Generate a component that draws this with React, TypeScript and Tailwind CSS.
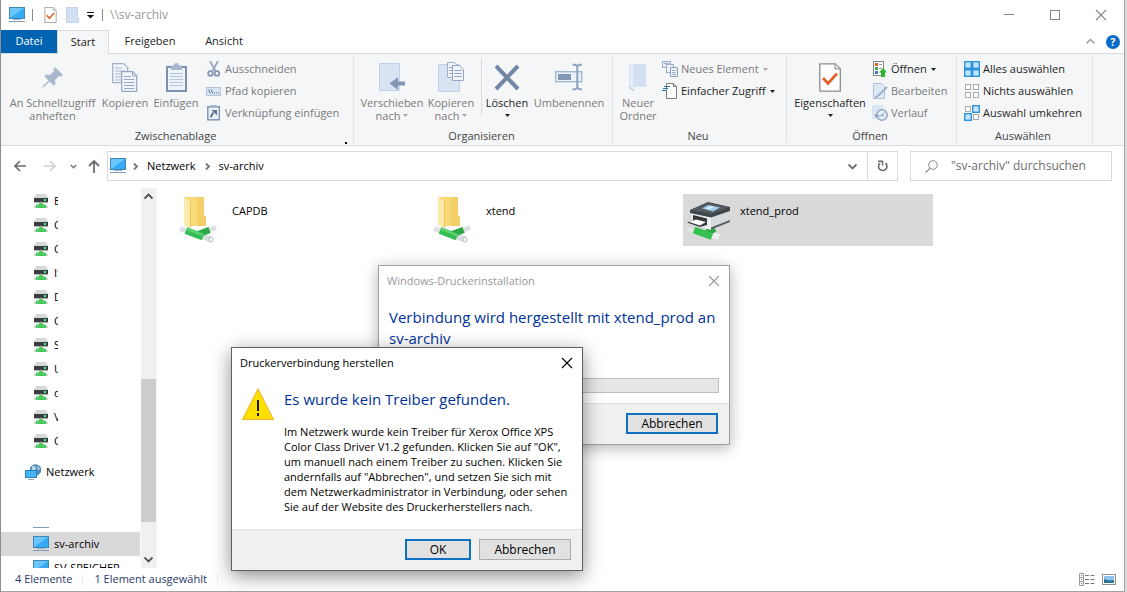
import type { ReactNode } from "react";
import clsx from "clsx";

function Svg({
  w,
  h,
  box,
  children,
}: {
  w: number;
  h: number;
  box?: string;
  children: ReactNode;
}) {
  return (
    <svg
      width={w}
      height={h}
      viewBox={box ?? `0 0 ${w} ${h}`}
      fill="none"
      aria-hidden="true"
      className="shrink-0"
    >
      {children}
    </svg>
  );
}

// Icons

function ComputerIcon() {
  return (
    <Svg w={16} h={16}>
      <rect x="0.5" y="0.5" width="15" height="11" fill="#35aaf5" stroke="#3f86b8" />
      <path d="M1 1h14L1 11z" fill="#6cc6fb" />
      <path d="M4 12.5h8" stroke="#9db6cc" />
      <path d="M0 14.5h16" stroke="#7f9dbb" />
    </Svg>
  );
}

function DriveIcon() {
  return (
    <Svg w={14} h={14}>
      <path d="M2 0h10l2 4H0z" fill="#d3d8d8" />
      <rect y="4" width="14" height="4" fill="#3b3f41" />
      <rect x="10" y="5" width="2" height="2" fill="#4df07a" />
      <path d="M0 8h14v1H0z" fill="#aeb5b3" />
      <path d="M5 9h4v1.500h3V14H2v-3.500h3z" fill="#4cc95c" />
      <path d="M0 11.500h2V14H0zM12 11.500h2V14h-2z" fill="#c9d3cd" />
    </Svg>
  );
}

function NetworkIcon() {
  return (
    <Svg w={17} h={16}>
      <circle cx="10.500" cy="6" r="5.800" fill="#4f8dbd" />
      <path d="M7 2.500c2-1 4 0 4 2s-3 1-4 2zM12 1.500l3 3-2 2z" fill="#bcd9ea" />
      <rect x="0.500" y="6.500" width="11" height="7" fill="#45b4f7" stroke="#2c80b8" />
      <path d="M3 15.500h6" stroke="#93aabd" />
    </Svg>
  );
}

function CheckPageIcon({ w, h }: { w: number; h: number }) {
  return (
    <Svg w={w} h={h} box="0 0 22 29">
      <path d="M.8.800h15.500l5 5V28.200H.8z" fill="#fff" stroke="#8b8b8b" strokeWidth="1.300" />
      <path d="M16 1v5h5" stroke="#8b8b8b" fill="#e9e9e9" />
      <path d="m4 15 5 5.500 9-10" stroke="#e2622a" strokeWidth="2.800" />
    </Svg>
  );
}

function PinIcon() {
  return (
    <Svg w={22} h={22}>
      <path
        d="m13 1 8 8-2 1.500-2-.500-4 4 .5 4-2 1.500-4-4L2 21l-1.500.500L1 20l5.500-5.500-4-4L4 8.500l4 .5 4-4-.5-2z"
        fill="#a9b8cd"
      />
    </Svg>
  );
}

function PagesIcon() {
  return (
    <Svg w={26} h={29}>
      <path d="M.7.700h11l4 4v15h-15z" fill="#f2f6fb" stroke="#9fb0c8" strokeWidth="1.200" />
      <path d="M3 5h7M3 8h10M3 11h10M3 14h10M3 17h10" stroke="#a8bad3" />
      <path d="M9.700 8.700h11l4 4v15.600h-15z" fill="#f2f6fb" stroke="#93a6c1" strokeWidth="1.200" />
      <path d="M20.500 9v4h4" stroke="#93a6c1" />
      <path
        d="M12 13.500h7M12 16.500h10.500M12 19.500h10.500M12 22.500h10.500M12 25.500h10.500"
        stroke="#93a9c9"
      />
    </Svg>
  );
}

function ClipboardIcon() {
  return (
    <Svg w={21} h={29}>
      <rect x="1" y="4" width="19" height="24" fill="#eef3fa" stroke="#7f90ae" strokeWidth="2" />
      <path d="M5 2.500h3a2.500 2.500 0 0 1 5 0h3V7H5z" fill="#a9b6ca" />
      <path
        d="M4 10.500h13M4 13.500h13M4 16.500h13M4 19.500h13M4 22.500h13"
        stroke="#b7c6dc"
      />
    </Svg>
  );
}

function ScissorsIcon() {
  return (
    <Svg w={16} h={16}>
      <path d="m4 0 5.500 10M12 0 6.500 10" stroke="#9aa8bd" strokeWidth="1.800" />
      <circle cx="4.500" cy="12.500" r="2.300" stroke="#8497b5" strokeWidth="1.800" />
      <circle cx="11" cy="12.500" r="2.300" stroke="#8497b5" strokeWidth="1.800" />
    </Svg>
  );
}

function PathIcon() {
  return (
    <Svg w={16} h={16}>
      <rect x="0.500" y="4.500" width="14" height="8" fill="#dae5f3" stroke="#b3c3d9" />
      <path
        d="m2.500 6.500 2 4M5 6.500l2 4M8 10h1M10 10h1M12 10h1"
        stroke="#5a6f91"
      />
    </Svg>
  );
}

function ShortcutIcon() {
  return (
    <Svg w={16} h={16}>
      <rect x="1.800" y="1.800" width="11.500" height="13" fill="#eef3fa" stroke="#8496b5" strokeWidth="1.500" />
      <path d="M4.500 0h6v3h-6z" fill="#a9b6ca" />
      <path d="M5 12.500c0-2.500 1-3.500 2.500-5" stroke="#5e7598" strokeWidth="1.800" />
      <path d="M5.500 5H11v5.500z" fill="#5e7598" />
    </Svg>
  );
}

function MoveToIcon() {
  return (
    <Svg w={27} h={30}>
      <path d="M.5 1.500h20v27H.5z" fill="#d9e4f3" stroke="#c0d0e6" />
      <path d="M26 19.500v4h-7v4.500L10.500 21.500l8.500-6.500v4.500z" fill="#8497b5" />
    </Svg>
  );
}

function CopyToIcon() {
  return (
    <Svg w={27} h={30}>
      <path d="M.5 2.500h21v27H.5z" fill="#d9e4f3" stroke="#c0d0e6" />
      <path d="M9.500.500h7l3 3v12h-10z" fill="#f2f6fb" stroke="#9fb0c8" />
      <path d="M14.500 3.500h7l4 4v11h-11z" fill="#f2f6fb" stroke="#93a6c1" />
      <path
        d="M16 8.500h8M16 11.500h8M16 14.500h8M11 5.500h3M11 8.500h3M11 11.500h3"
        stroke="#93a9c9"
      />
    </Svg>
  );
}

function DeleteIcon() {
  return (
    <Svg w={26} h={27}>
      <path d="m2 2 22 23M24 2 2 25" stroke="#7386a5" strokeWidth="4" />
    </Svg>
  );
}

function RenameIcon() {
  return (
    <Svg w={28} h={28}>
      <rect x="0.700" y="8.700" width="26" height="10" fill="#eaf1f9" stroke="#9fb3cf" strokeWidth="1.300" />
      <rect x="3" y="11" width="13" height="6" fill="#8497b5" />
      <path
        d="M17.500 1.500c3 0 4 .5 5 1.500 1-1 2-1.500 4.500-1.500M17.500 26.500c3 0 4-.5 5-1.500 1 1 2 1.500 4.500 1.500M22.300 3v22"
        stroke="#8da0bd"
        strokeWidth="2"
      />
    </Svg>
  );
}

function NewFolderIcon() {
  return (
    <Svg w={18} h={28}>
      <path d="M4 1h13v20l1 3H5z" fill="#d5e1f2" />
      <path d="m0 1 5 3v24l-5-5z" fill="#e4ecf7" stroke="#c6d4e9" strokeWidth="0.600" />
      <path d="m0 24 4 3.500" stroke="#b2bfd2" />
    </Svg>
  );
}

function NewItemIcon() {
  return (
    <Svg w={16} h={16}>
      <rect x="0.500" y="0.500" width="8" height="6" fill="#e3ecf7" stroke="#9cb0cd" />
      <rect x="4.500" y="3.500" width="7" height="8" fill="#eef3fa" stroke="#9cb0cd" />
      <path d="M8.500 6.500h7v9h-7z" fill="#eef3fa" stroke="#8ba1c1" />
      <path d="M10 9.500h4M10 11.500h4M10 13.500h4M2 2.500h5" stroke="#9cb0cd" />
    </Svg>
  );
}

function EasyAccessIcon() {
  return (
    <Svg w={16} h={16}>
      <path d="M4.500.500h7l3 3v12h-10z" fill="#fff" stroke="#7d7d7d" />
      <path d="M11.500.500v3h3" stroke="#7d7d7d" />
      <path d="M2 3.500h6M1 5.500h5M0 7.500h4" stroke="#2f74a8" />
    </Svg>
  );
}

function OpenIcon() {
  return (
    <Svg w={16} h={16}>
      <rect x="1.500" y="0.500" width="10" height="14" fill="#fff" stroke="#8a8a8a" />
      <path d="M3 2h3v3H3z" fill="#e2622a" />
      <path d="M3 6h3v3H3z" fill="#3cae4a" />
      <path d="M3 10h3v3H3z" fill="#3c7fc0" />
      <path d="M7 3.500h3M7 7.500h3" stroke="#9b9b9b" />
      <path d="m11 7 4 4.500h-2V16H9v-4.500H7z" fill="#2fb52f" />
    </Svg>
  );
}

function EditIcon() {
  return (
    <Svg w={16} h={16}>
      <path d="M1.500.500h8l3 3v12h-11z" fill="#dfe9f6" stroke="#b0c0d8" />
      <path d="m15 4-9 9" stroke="#9db0cb" strokeWidth="2.200" />
      <path d="m3 15 1-3 2 2z" fill="#8497b5" />
    </Svg>
  );
}

function HistoryIcon() {
  return (
    <Svg w={16} h={16}>
      <path d="M0 0h11v14H0z" fill="#dae5f3" />
      <circle cx="10" cy="10" r="5.200" fill="#e7eef8" stroke="#93a7c5" strokeWidth="1.500" />
      <path d="m7 11.500 3-1.500 2.500-2.500M10 10l2 1.500" stroke="#8497b5" />
      <path d="M2 9.500 4.500 13 7 10z" fill="#8497b5" />
    </Svg>
  );
}

function SelectIcon({ on }: { on: boolean[] }) {
  const spots = [
    [1, 1],
    [9, 1],
    [1, 9],
    [9, 9],
  ];
  return (
    <Svg w={16} h={16}>
      {spots.map(([x, y], i) => (
        <rect
          key={i}
          x={on[i] ? x - 0.300 : x + 0.500}
          y={on[i] ? y - 0.300 : y + 0.500}
          width={on[i] ? 6.600 : 5}
          height={on[i] ? 6.600 : 5}
          fill={on[i] ? "#bfe4fb" : "#fff"}
          stroke={on[i] ? "#2f93dc" : "#ababab"}
          strokeWidth={on[i] ? 1.400 : 1}
        />
      ))}
    </Svg>
  );
}

function SharedFolderIcon() {
  return (
    <Svg w={38} h={48}>
      <path d="M5 1h20v18l2 2v9H12z" fill="#f8d978" />
      <path d="M18 1h7v18l2 2v9h-9z" fill="#f4cf68" />
      <path d="m5 1 7 5v26l-7-4z" fill="#eec65c" />
      <path d="m5 1 6 4v27l-6-3z" fill="#fde9ac" />
      <path d="m1 32.500 7 3" stroke="#dde1e4" strokeWidth="5" />
      <path d="m30 34 7-2.500" stroke="#dde1e4" strokeWidth="5" />
      <path d="m23 40 9 3.500" stroke="#d8dde0" strokeWidth="6" />
      <path d="m17 39 13.500-5" stroke="#2aa846" strokeWidth="6.500" />
      <path d="m7 34.500 17 6.500" stroke="#34bd50" strokeWidth="7" />
      <path d="m8 33 16 6" stroke="#5cd674" strokeWidth="2" />
      <ellipse cx="32" cy="43.500" rx="2" ry="2.600" fill="#f7f9fa" stroke="#b3babf" />
    </Svg>
  );
}

function SharedPrinterIcon() {
  return (
    <Svg w={46} h={40}>
      <path d="m1 29 7 3" stroke="#dfe3e6" strokeWidth="4" />
      <path d="m22 34 10 3" stroke="#eef1f2" strokeWidth="6" />
      <path d="m17 34 11-5" stroke="#2aa846" strokeWidth="6" />
      <path d="m7 30 18 6.500" stroke="#35c252" strokeWidth="7" />
      <path d="m4 12 20 5v13L6 24z" fill="#eceeef" />
      <path d="m24 16 19-5v10l-19 8z" fill="#d6d9db" />
      <path d="m24 27.500 19-7.500v2l-19 7.500z" fill="#565b60" />
      <path d="m3 10 18-8 22 5v4L24 17.500 3 13z" fill="#41464b" />
      <path d="m4 10 17-7 21 4.500L24 14z" fill="#555b61" />
      <path d="m15 8.500 6-3.500 12 2.500-7 4z" fill="#9ed0f1" />
      <path d="m19 8.500 5-2.500 3 .6-4 2.700z" fill="#e1f2fc" />
      <path d="m6 15 14 3.500V25L13 27 0 22.500l6-2z" fill="#33373b" />
      <path d="m2 22 7-2.500 10 2.500-6 3.500z" fill="#fdfdfd" />
    </Svg>
  );
}

function WarningIcon() {
  return (
    <Svg w={32} h={32}>
      <path d="M16 1 31.300 31.300H.7z" fill="#ffe100" stroke="#f5b92e" strokeWidth="1.200" />
      <path d="M16 12v11M16 25v3" stroke="#1a1a1a" strokeWidth="2" />
    </Svg>
  );
}

function CrossIcon() {
  return (
    <Svg w={12} h={12}>
      <path d="m1 1 10 10M11 1 1 11" stroke="currentColor" strokeWidth="1.100" />
    </Svg>
  );
}

function Caret() {
  return (
    <Svg w={5} h={3}>
      <path d="M0 0h5L2.500 3z" fill="currentColor" />
    </Svg>
  );
}

function Chevron({ d }: { d: string }) {
  return (
    <Svg w={9} h={9}>
      <path d={d} stroke="currentColor" strokeWidth="1.800" />
    </Svg>
  );
}

// Ribbon

function Group({
  label,
  className,
  children,
}: {
  label: string;
  className: string;
  children: ReactNode;
}) {
  return (
    <section
      aria-label={label}
      className={clsx(
        "relative flex shrink-0 flex-col justify-between pb-px after:absolute after:top-[2px] after:right-0 after:bottom-[2px] after:w-px after:bg-[#e2e3e4]",
        className,
      )}
    >
      <div className="flex pt-1 pl-[5px]">{children}</div>
      <div className="pr-1 text-center leading-4 text-[#444]">{label}</div>
    </section>
  );
}

function BigButton({
  icon,
  lines,
  className,
  menu,
  active,
}: {
  icon: ReactNode;
  lines: string[];
  className: string;
  menu?: boolean;
  active?: boolean;
}) {
  const last = lines.length - 1;
  return (
    <button
      type="button"
      className={clsx(
        "flex shrink-0 flex-col items-center whitespace-nowrap",
        active ? "text-[#1e1e1e]" : "text-[#7a7a7a]",
        className,
      )}
    >
      <span className="flex h-[38px] items-center">{icon}</span>
      {lines.map((line, i) => (
        <span key={i} className="flex h-[13px] items-center gap-[3px] leading-[13px]">
          {line}
          {menu && i === last && (
            <span className={active ? "" : "text-[#a8a8a8]"}>
              <Caret />
            </span>
          )}
        </span>
      ))}
    </button>
  );
}

function SmallButton({
  icon,
  label,
  menu,
  active,
}: {
  icon: ReactNode;
  label: string;
  menu?: boolean;
  active?: boolean;
}) {
  return (
    <button
      type="button"
      className={clsx(
        "flex h-[22px] items-center gap-[3px] whitespace-nowrap",
        active ? "text-[#1e1e1e]" : "text-[#7a7a7a]",
      )}
    >
      {icon}
      <span>{label}</span>
      {menu && (
        <span className={clsx("ml-px", !active && "text-[#a8a8a8]")}>
          <Caret />
        </span>
      )}
    </button>
  );
}

function Ribbon() {
  return (
    <div className="flex h-[92px] shrink-0 overflow-hidden border-b border-[#dadbdc] bg-[#f5f6f7] text-[11px]">
      <Group label="Zwischenablage" className="w-[353px]">
        <BigButton icon={<PinIcon />} lines={["An Schnellzugriff", "anheften"]} className="w-[93px]" />
        <BigButton icon={<PagesIcon />} lines={["Kopieren"]} className="w-[52px]" />
        <BigButton icon={<ClipboardIcon />} lines={["Einfügen"]} className="w-[50px]" />
        <div className="ml-[5px] flex flex-col">
          <SmallButton icon={<ScissorsIcon />} label="Ausschneiden" />
          <SmallButton icon={<PathIcon />} label="Pfad kopieren" />
          <SmallButton icon={<ShortcutIcon />} label="Verknüpfung einfügen" />
        </div>
        <span className="absolute right-[7px] bottom-px size-[2px] bg-black" />
      </Group>
      <Group label="Organisieren" className="w-[259px]">
        <BigButton icon={<MoveToIcon />} lines={["Verschieben", "nach"]} menu className="w-[66px]" />
        <BigButton icon={<CopyToIcon />} lines={["Kopieren", "nach"]} menu className="w-[52px]" />
        <div className="ml-1 h-[58px] w-px bg-[#dadbdc]" />
        <BigButton icon={<DeleteIcon />} lines={["Löschen", ""]} menu active className="w-[50px]" />
        <BigButton icon={<RenameIcon />} lines={["Umbenennen"]} className="w-[74px]" />
      </Group>
      <Group label="Neu" className="w-[174px]">
        <BigButton icon={<NewFolderIcon />} lines={["Neuer", "Ordner"]} className="w-[40px]" />
        <div className="ml-1 flex flex-col">
          <SmallButton icon={<NewItemIcon />} label="Neues Element" menu />
          <SmallButton icon={<EasyAccessIcon />} label="Einfacher Zugriff" menu active />
        </div>
      </Group>
      <Group label="Öffnen" className="w-[170px]">
        <BigButton
          icon={<CheckPageIcon w={22} h={29} />}
          lines={["Eigenschaften", ""]}
          menu
          active
          className="w-[76px]"
        />
        <div className="ml-1 flex flex-col">
          <SmallButton icon={<OpenIcon />} label="Öffnen" menu active />
          <SmallButton icon={<EditIcon />} label="Bearbeiten" />
          <SmallButton icon={<HistoryIcon />} label="Verlauf" />
        </div>
      </Group>
      <Group label="Auswählen" className="w-[136px]">
        <div className="ml-[2px] flex flex-col">
          <SmallButton icon={<SelectIcon on={[true, true, true, true]} />} label="Alles auswählen" active />
          <SmallButton icon={<SelectIcon on={[false, false, false, false]} />} label="Nichts auswählen" active />
          <SmallButton icon={<SelectIcon on={[false, true, true, false]} />} label="Auswahl umkehren" active />
        </div>
      </Group>
    </div>
  );
}

// Window parts

function TitleBar() {
  return (
    <header className="flex h-[30px] shrink-0 items-center pl-2">
      <ComputerIcon />
      <span className="ml-[7px] h-[12px] w-px bg-[#8a8a8a]" />
      <button type="button" aria-label="Eigenschaften" className="ml-[11px]">
        <CheckPageIcon w={13} h={16} />
      </button>
      <button type="button" aria-label="Neuer Ordner" className="ml-[9px]">
        <Svg w={13} h={16}>
          <path d="M.5.500h11v9l1 1v5H.5z" fill="#d3e0f3" stroke="#c3d3ea" />
        </Svg>
      </button>
      <button type="button" aria-label="Symbolleiste anpassen" className="ml-[8px]">
        <Svg w={7} h={7}>
          <path d="M0 .5h7" stroke="#111" />
          <path d="M0 3h7L3.500 6.500z" fill="#111" />
        </Svg>
      </button>
      <span className="ml-[8px] h-[12px] w-px bg-[#8a8a8a]" />
      <h1 className="ml-[7px] text-[12px] text-[#999]">\\sv-archiv</h1>
      <div className="ml-auto flex items-center text-[#888]">
        <button type="button" aria-label="Minimieren" className="flex w-[46px] justify-center">
          <Svg w={10} h={10}>
            <path d="M0 4.500h10" stroke="currentColor" />
          </Svg>
        </button>
        <button type="button" aria-label="Maximieren" className="flex w-[46px] justify-center">
          <Svg w={10} h={10}>
            <rect x="0.500" y="0.500" width="9" height="9" stroke="currentColor" />
          </Svg>
        </button>
        <button type="button" aria-label="Schließen" className="flex w-[46px] justify-center">
          <CrossIcon />
        </button>
      </div>
    </header>
  );
}

function Tabs() {
  return (
    <nav className="flex h-6 shrink-0 border-b border-[#dadbdc] text-[11px] text-[#222]">
      <button type="button" className="w-[56px] bg-[#0063b1] text-white">
        Datei
      </button>
      <button
        type="button"
        className="-mb-px w-[52px] border border-b-0 border-[#dadbdc] bg-[#f5f6f7]"
      >
        Start
      </button>
      <button type="button" className="w-[82px]">
        Freigeben
      </button>
      <button type="button" className="w-[66px]">
        Ansicht
      </button>
      <div className="ml-auto flex items-center gap-[11px] pr-[4px] text-[#999]">
        <button type="button" aria-label="Menüband minimieren">
          <Svg w={9} h={9}>
            <path d="m.5 6.500 4-4 4 4" stroke="currentColor" strokeWidth="1.300" />
          </Svg>
        </button>
        <button
          type="button"
          aria-label="Hilfe"
          className="flex size-[14px] items-center justify-center rounded-full bg-[#0a6cc8] text-[10px] leading-none font-bold text-white"
        >
          ?
        </button>
      </div>
    </nav>
  );
}

function AddressRow() {
  return (
    <div className="flex h-[42px] shrink-0 items-center pr-3 pb-[2px] text-[12px] text-[#6b6b6b]">
      <button type="button" aria-label="Zurück" className="ml-[13px]">
        <Svg w={12} h={12}>
          <path d="M12 6H1M6 1 1 6l5 5" stroke="#6b6b6b" strokeWidth="1.600" />
        </Svg>
      </button>
      <button type="button" aria-label="Vorwärts" className="ml-[18px]">
        <Svg w={12} h={12}>
          <path d="M0 6h11M6 1l5 5-5 5" stroke="#d2d2d2" strokeWidth="1.600" />
        </Svg>
      </button>
      <button type="button" aria-label="Zuletzt besucht" className="ml-[14px]">
        <Svg w={7} h={9}>
          <path d="m.8 3 2.700 2.700L6.200 3" stroke="#777" strokeWidth="1.500" />
        </Svg>
      </button>
      <button type="button" aria-label="Nach oben" className="ml-[11px]">
        <Svg w={12} h={14}>
          <path d="M6 14V2M1 7l5-5 5 5" stroke="#6b6b6b" strokeWidth="1.800" />
        </Svg>
      </button>
      <div className="ml-[7px] flex h-[30px] flex-1 items-center border border-[#d9d9d9] pl-[2px]">
        <ComputerIcon />
        <span className="ml-[5px] flex text-[#777]">
          <Chevron d="m3 1.500 3 3-3 3" />
        </span>
        <button type="button" className="ml-[7px] text-[11px] text-black">
          Netzwerk
        </button>
        <span className="ml-[7px] flex text-[#777]">
          <Chevron d="m3 1.500 3 3-3 3" />
        </span>
        <button type="button" className="ml-[7px] text-[11px] text-black">
          sv-archiv
        </button>
        <button type="button" aria-label="Vorherige Orte" className="mr-[10px] ml-auto">
          <Chevron d="m.5 2.500 4 4 4-4" />
        </button>
        <button
          type="button"
          aria-label="Aktualisieren"
          className="flex h-full w-[30px] items-center justify-center border-l border-[#d9d9d9]"
        >
          <Svg w={11} h={12}>
            <path d="M8.500 3.200a4.200 4.200 0 1 1-5.500 0" stroke="#6b6b6b" strokeWidth="1.600" />
            <path d="M1 1.300h4.500v4.200" stroke="#6b6b6b" strokeWidth="1.500" />
          </Svg>
        </button>
      </div>
      <label className="ml-3 flex h-[30px] w-[202px] items-center gap-[13px] border border-[#d9d9d9] pl-[14px]">
        <Svg w={13} h={13}>
          <circle cx="8" cy="5" r="4.300" stroke="#8a8a8a" />
          <path d="M5 8.500.5 12.500" stroke="#8a8a8a" strokeWidth="1.200" />
        </Svg>
        <input
          type="search"
          aria-label="sv-archiv durchsuchen"
          placeholder={'"sv-archiv" durchsuchen'}
          className="w-full min-w-0 text-[12px] outline-none placeholder:text-[#6d6d6d]"
        />
      </label>
    </div>
  );
}

const drives = ["E", "C", "C", "IS", "D", "C", "S", "U", "d", "V", "C"];

function Sidebar() {
  return (
    <aside className="flex w-[155px] shrink-0 text-[11px] text-black">
      <div className="flex flex-1 flex-col overflow-hidden">
        <ul className="pt-px">
          {drives.map((name, i) => (
            <li key={i} className="flex h-6 shrink-0 items-center pl-[33px]">
              <DriveIcon />
              <span className="ml-[6px] w-1 overflow-hidden whitespace-nowrap">{name}</span>
            </li>
          ))}
        </ul>
        <div className="mt-[7px] flex h-6 shrink-0 items-center gap-1 pl-6">
          <NetworkIcon />
          Netzwerk
        </div>
        <div className="mt-[43px] ml-[32px] h-px w-4 shrink-0 bg-[#7f9dbb]" />
        <div className="mt-1 flex h-6 shrink-0 items-center gap-[5px] bg-[#d9d9d9] pl-[32px]">
          <ComputerIcon />
          sv-archiv
        </div>
        <div className="-mb-3 flex h-6 shrink-0 items-center gap-[5px] pl-[32px]">
          <ComputerIcon />
          SV-SPEICHER
        </div>
      </div>
      <div className="ml-px flex w-[15px] flex-col bg-[#f0f0f0] text-[#505050]">
        <button type="button" aria-label="Nach oben scrollen" className="flex h-[17px] items-center justify-center">
          <Chevron d="M.5 6.500 4.500 2.500l4 4" />
        </button>
        <div className="flex flex-1 flex-col">
          <div className="flex-[174]" />
          <div className="flex-[143] bg-[#cdcdcd]" />
          <div className="flex-[29]" />
        </div>
        <button type="button" aria-label="Nach unten scrollen" className="flex h-[17px] items-center justify-center">
          <Chevron d="m.5 2.500 4 4 4-4" />
        </button>
      </div>
    </aside>
  );
}

function FileItem({
  name,
  icon,
  selected,
}: {
  name: string;
  icon: ReactNode;
  selected?: boolean;
}) {
  return (
    <li className={clsx("flex h-[52px] w-[250px] pl-1", selected && "bg-[#d9d9d9]")}>
      <span className="flex w-[53px] shrink-0 items-center">{icon}</span>
      <span className="mt-[9px] text-[11px] leading-4 text-black">{name}</span>
    </li>
  );
}

// Dialogs

function DialogButton({ label, primary }: { label: string; primary?: boolean }) {
  return (
    <button
      type="button"
      className={clsx(
        "h-[21px] bg-[#e1e1e1] text-[12px] leading-none text-black",
        label === "OK" ? "w-[66px]" : "w-[92px]",
        primary ? "border-2 border-[#0f6fc0]" : "border border-[#adadad]",
      )}
    >
      {label}
    </button>
  );
}

function Dialog({
  title,
  inactive,
  className,
  footer,
  children,
}: {
  title: string;
  inactive?: boolean;
  className: string;
  footer: ReactNode;
  children: ReactNode;
}) {
  return (
    <div
      role="dialog"
      aria-label={title}
      className={clsx(
        "absolute flex w-[352px] flex-col border bg-white",
        inactive
          ? "border-[#a0a0a0] shadow-[0_3px_14px_rgba(0,0,0,0.300)]"
          : "border-[#606060] shadow-[0_5px_18px_rgba(0,0,0,0.450)]",
        className,
      )}
    >
      <div
        className={clsx(
          "flex h-[30px] items-center justify-between pr-[9px] pl-2 text-[11px]",
          inactive ? "text-[#999]" : "text-black",
        )}
      >
        <span>{title}</span>
        <button type="button" aria-label="Schließen">
          <CrossIcon />
        </button>
      </div>
      {children}
      <div className="flex h-[41px] justify-end gap-2 border-t border-[#dfdfdf] bg-[#f0f0f0] pt-[9px] pr-[11px]">
        {footer}
      </div>
    </div>
  );
}

export default function App() {
  return (
    <div className="relative flex h-screen min-h-[500px] flex-col overflow-hidden border-l border-[#8e8e8e] bg-[#dcdcdc] pr-[2px] font-['Open_Sans','Noto_Sans',sans-serif] select-none">
      <main className="flex min-h-0 flex-1 flex-col border-r border-b border-[#a3a3a3] bg-white">
        <TitleBar />
        <Tabs />
        <Ribbon />
        <AddressRow />
        <div className="flex min-h-0 flex-1">
          <Sidebar />
          <ul className="flex flex-1 flex-wrap content-start gap-1 border-l border-[#f5f5f5] pt-[6px] pl-[18px]">
            <FileItem name="CAPDB" icon={<SharedFolderIcon />} />
            <FileItem name="xtend" icon={<SharedFolderIcon />} />
            <FileItem name="xtend_prod" icon={<SharedPrinterIcon />} selected />
          </ul>
        </div>
        <footer className="flex h-[23px] shrink-0 items-center pr-2 pl-[14px] text-[11px] text-[#1f3a68]">
          <span>4 Elemente</span>
          <span className="ml-[10px] h-3 w-px bg-[#ececec]" />
          <span className="ml-[11px]">1 Element ausgewählt</span>
          <span className="ml-[10px] h-3 w-px bg-[#ececec]" />
          <div className="ml-auto flex items-center gap-[7px]">
            <button type="button" aria-label="Details">
              <Svg w={16} h={13}>
                <path d="M.5.500h4v12h-4zM.5 4.500h4M.5 8.500h4" stroke="#9a9a9a" />
                <path
                  d="M6 2.500h4M11.500 2.500h4M6 6.500h4M11.500 6.500h4M6 10.500h4M11.500 10.500h4M2 2.500h1M2 6.500h1M2 10.500h1"
                  stroke="#777"
                />
              </Svg>
            </button>
            <button type="button" aria-label="Große Symbole">
              <Svg w={14} h={11}>
                <rect x="0.500" y="0.500" width="13" height="10" fill="#fff" stroke="#8f8f8f" />
                <rect x="2" y="2" width="10" height="7" fill="#8cc3ea" />
                <path d="m2 5 5 1.500 5-.5v3H2z" fill="#2d7391" />
              </Svg>
            </button>
          </div>
        </footer>
      </main>

      <Dialog
        title="Windows-Druckerinstallation"
        inactive
        className="top-[265px] left-[377px]"
        footer={<DialogButton label="Abbrechen" primary />}
      >
        <h2 className="mt-[11px] px-[10px] text-[15px] leading-[21px] text-[#003399]">
          Verbindung wird hergestellt mit xtend_prod an sv-archiv
        </h2>
        <div
          role="progressbar"
          aria-label="Verbindung wird hergestellt"
          className="mx-[10px] mt-[29px] mb-[10px] h-[15px] border border-[#bcbcbc] bg-[#e6e6e6]"
        />
      </Dialog>

      <Dialog
        title="Druckerverbindung herstellen"
        className="top-[347px] left-[230px]"
        footer={
          <>
            <DialogButton label="OK" primary />
            <DialogButton label="Abbrechen" />
          </>
        }
      >
        <div className="flex gap-[10px] pt-[10px] pr-1 pb-[15px] pl-[10px]">
          <WarningIcon />
          <div className="flex-1">
            <h2 className="mt-px text-[15px] leading-[21px] text-[#003399]">
              Es wurde kein Treiber gefunden.
            </h2>
            <p className="mt-[14px] text-[11px] leading-[15px] text-black">
              Im Netzwerk wurde kein Treiber für Xerox Office XPS
              <br />
              Color Class Driver V1.2 gefunden. Klicken Sie auf "OK",
              <br />
              um manuell nach einem Treiber zu suchen. Klicken Sie
              <br />
              andernfalls auf "Abbrechen", und setzen Sie sich mit
              <br />
              dem Netzwerkadministrator in Verbindung, oder sehen
              <br />
              Sie auf der Website des Druckerherstellers nach.
            </p>
          </div>
        </div>
      </Dialog>
    </div>
  );
}
